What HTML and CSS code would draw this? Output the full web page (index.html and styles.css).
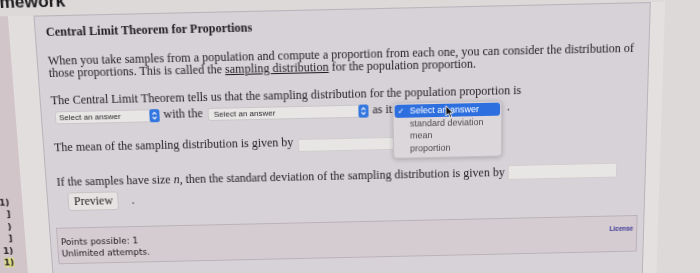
FILE: index.html
```html
<!DOCTYPE html>
<html>
<head>
<meta charset="utf-8">
<title>Homework</title>
<link rel="stylesheet" href="styles.css">
</head>
<body>
<div class="screen">
  <h1 class="page-title">Homework</h1>
  <div class="layout">
    <nav class="sidebar">
      <div class="q-item">1)</div>
      <div class="q-item">]</div>
      <div class="q-item">)</div>
      <div class="q-item">]</div>
      <div class="q-item">1)</div>
      <div class="q-item"><span class="current">1)</span></div>
    </nav>
    <div class="gutter"></div>
    <main class="question">
      <h2 class="q-title">Central Limit Theorem for Proportions</h2>
      <p class="para">When you take samples from a population and compute a proportion from each one, you can consider the distribution of those proportions. This is called the <a class="link">sampling distribution</a> for the population proportion.</p>
      <p class="para">The Central Limit Theorem tells us that the sampling distribution for the population proportion is</p>
      <div class="answer-row">
        <div class="select s1"><span class="sel-text">Select an answer</span><svg class="stepper" width="10" height="13" viewBox="0 0 10 13"><rect width="10" height="13" rx="2.5" fill="#3276df"/><path d="M3 5.3 5 3.3 7 5.3M3 7.7 5 9.7 7 7.7" fill="none" stroke="#fff" stroke-width="1.1"/></svg></div>
        <span class="txt">with the</span>
        <div class="select s2"><span class="sel-text">Select an answer</span><svg class="stepper" width="10" height="13" viewBox="0 0 10 13"><rect width="10" height="13" rx="2.5" fill="#3276df"/><path d="M3 5.3 5 3.3 7 5.3M3 7.7 5 9.7 7 7.7" fill="none" stroke="#fff" stroke-width="1.1"/></svg></div>
        <span class="txt">as it</span>
        <div class="select s3"><span class="sel-text">Select an answer</span><svg class="stepper" width="10" height="13" viewBox="0 0 10 13"><rect width="10" height="13" rx="2.5" fill="#3276df"/><path d="M3 5.3 5 3.3 7 5.3M3 7.7 5 9.7 7 7.7" fill="none" stroke="#fff" stroke-width="1.1"/></svg></div>
        <span class="txt end-dot">.</span>
      </div>
      <div class="input-line mean-line">The mean of the sampling distribution is given by <span class="answer-box mean-box"></span></div>
      <div class="input-line std-line">If the samples have size <i>n</i>, then the standard deviation of the sampling distribution is given by <span class="answer-box std-box"></span></div>
      <div class="preview-row"><button class="preview">Preview</button><span class="dot">.</span></div>
      <div class="footer">
        <a class="license">License</a>
        <div>Points possible: 1</div>
        <div>Unlimited attempts.</div>
      </div>

      <div class="menu">
        <div class="menu-item active"><span class="check">&#10003;</span>Select an answer</div>
        <div class="menu-item">standard deviation</div>
        <div class="menu-item">mean</div>
        <div class="menu-item">proportion</div>
      </div>
      <svg class="cursor" width="9" height="14" viewBox="0 0 9 14"><path d="M1 1 L1 11 L3.4 8.8 L5.2 12.8 L6.8 12.1 L5.1 8.3 L8.2 8.3 Z" fill="#111" stroke="#fff" stroke-width="0.9" stroke-linejoin="round"/></svg>
    </main>
    <div class="edge"></div>
  </div>
</div>
</body>
</html>
```
FILE: styles.css
```css
html, body {
  margin: 0;
  padding: 0;
  background: #dcd9d8;
  overflow: hidden;
}
body {
  width: 700px;
  height: 273px;
}
.screen {
  width: 770px;
  height: 330px;
  margin: -24px 0 0 -30px;
  padding-top: 13px;
  box-sizing: border-box;
  background: #dcd9d8;
  transform-origin: 375px 164px;
  transform: rotate(-1.26deg) perspective(600px) rotateX(-5.85deg);
  filter: blur(0.3px);
  font-family: "Liberation Serif", "Times New Roman", serif;
  color: #1f1c21;
}
.page-title {
  margin: 0 0 0 18px;
  height: 18px;
  font: bold 17px/18px "Liberation Sans", Arial, sans-serif;
  color: #1d1b1e;
}
.layout {
  display: flex;
  height: 300px;
  margin-top: 4px;
}
.sidebar {
  width: 49px;
  flex: none;
  box-sizing: border-box;
  background: #d2c5ca;
  border-right: 1px solid #e4dfe0;
  padding: 178.6px 13px 0 0;
  text-align: right;
  font: bold 9px/12.5px "DejaVu Sans", sans-serif;
  color: #2a2528;
}
.current {
  background: #dcdc86;
}
.gutter {
  width: 24px;
  flex: none;
  background: #e1dedd;
}
.question {
  width: 604px;
  flex: none;
  box-sizing: border-box;
  position: relative;
  border: 1px solid #b9b3ba;
  background: #d7d2d8;
  padding: 9.4px 8px 0 10px;
}
.q-title {
  margin: 0;
  font: bold 12px/12.5px "Liberation Serif", serif;
}
.para {
  margin: 14.8px 0 0;
  font-size: 12px;
  line-height: 12.5px;
}
.link {
  color: inherit;
  text-decoration: underline;
}
.answer-row {
  display: flex;
  align-items: baseline;
  margin-top: 3px;
  font-size: 12px;
  line-height: 12.5px;
}
.select {
  display: inline-flex;
  box-sizing: border-box;
  height: 13px;
  border: 1px solid #cbc6c9;
  border-radius: 3px;
  background: #e8e5e5;
  font: 8px/11px "Liberation Sans", Arial, sans-serif;
  color: #2b2a2c;
}
.sel-text {
  flex: 1;
  padding-left: 3px;
  white-space: nowrap;
  overflow: hidden;
}
.stepper {
  flex: none;
  margin: -1px -1px -1px 0;
}
.s1 { width: 104px; margin-left: 3px; }
.s2 { width: 160px; margin-left: 5px; }
.s3 { width: 98px; margin-left: 4px; }
.txt { margin-left: 4px; }
.end-dot { margin-left: 12px; }
.s2 .sel-text { padding-left: 5px; }
.input-line {
  font-size: 12px;
  line-height: 12.5px;
}
.mean-line { margin-top: 17px; }
.std-line { margin-top: 18.5px; }
.answer-box {
  display: inline-block;
  box-sizing: border-box;
  height: 15px;
  vertical-align: -4px;
  border: 1px solid #d2cecf;
  background: #e8e6e4;
}
.mean-box {
  width: 110px;
  margin-left: 2px;
  height: 13px;
  vertical-align: -6px;
}
.std-box { width: 110px; }
.preview-row {
  display: flex;
  align-items: baseline;
  margin-top: 3px;
}
.preview {
  margin-left: 10px;
  padding: 2px 5px;
  border: 1px solid #c7c3c4;
  border-radius: 3px;
  background: #e6e3e2;
  font: 12px/12.5px "Liberation Serif", serif;
  color: #1f1c21;
}
.dot {
  margin-left: 13px;
  font-size: 12px;
}
.footer {
  margin: 17.5px -2px 0 -4px;
  border: 1px solid #bab2b8;
  background: #d5ccd1;
  padding: 8px 3px 3.4px;
  font: 9px/12px "DejaVu Sans", sans-serif;
  color: #1c191c;
}
.license {
  float: right;
  margin-top: -1px;
  font: bold 6.5px/12px "Liberation Sans", Arial, sans-serif;
  color: #3b3596;
}
.menu {
  position: absolute;
  left: 349px;
  top: 92px;
  width: 109px;
  box-sizing: border-box;
  padding: 1px 0 3px;
  border: 1px solid #c6c1c4;
  border-radius: 4px;
  background: #dbd7da;
  box-shadow: 0 1px 5px rgba(0, 0, 0, 0.22);
  font: 9px/12.5px "Liberation Sans", Arial, sans-serif;
  color: #4f4b50;
}
.menu-item {
  height: 12.5px;
  padding-left: 16px;
}
.menu-item.active {
  margin: 0 1px;
  padding-left: 3px;
  border-radius: 3px;
  background: #2e6fdf;
  color: #fff;
}
.check {
  display: inline-block;
  width: 12px;
  font-family: "DejaVu Sans", sans-serif;
  font-weight: bold;
  font-size: 8px;
}
.cursor {
  position: absolute;
  left: 401px;
  top: 95px;
}
.edge {
  width: 14px;
  flex: none;
  background: #e3e0df;
}
```
